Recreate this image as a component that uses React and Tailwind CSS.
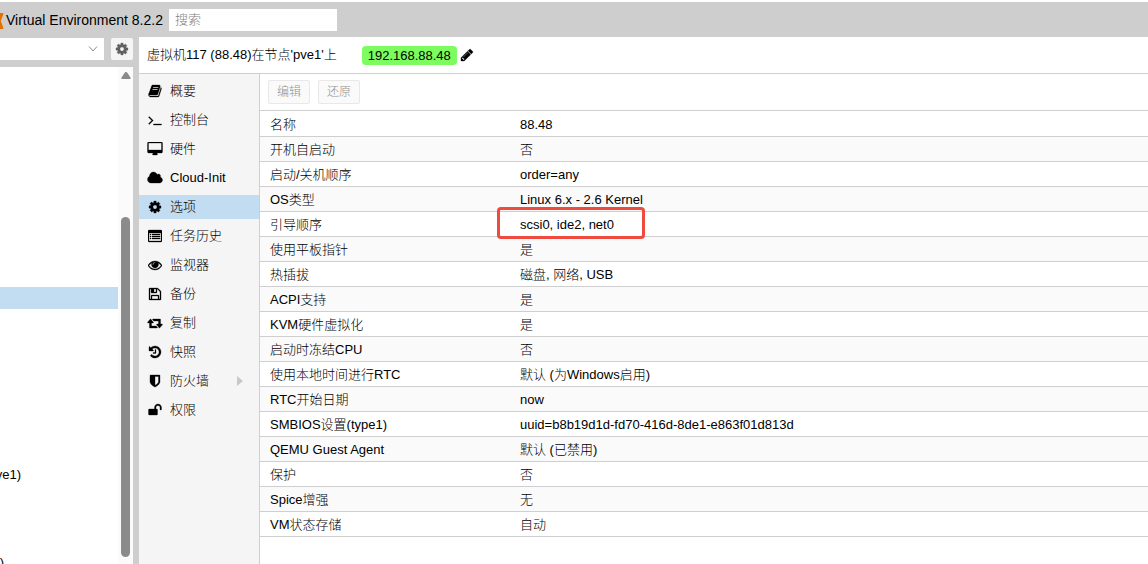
import { useState } from 'react';
import clsx from 'clsx';

const ICONS = {
  book: {
    width: 1792,
    d: 'M1703 478q40 57 18 129l-275 906q-19 64-76.5 107.5t-122.5 43.5h-923q-77 0-148.5-53.5t-99.5-131.5q-24-67-2-127 0-4 3-27t4-37q1-8-3-21.5t-3-19.5q2-11 8-21t16.5-23.5 16.5-23.5q23-38 45-91.5t30-91.5q3-10 .5-30t-.5-28q3-11 17-28t17-23q21-36 42-92t25-90q1-9-2.5-32t.5-28q4-13 22-30.5t22-22.5q19-26 42.5-84.5t27.5-96.5q1-8-3-25.5t-2-26.5q2-8 9-18t18-23 17-21q8-12 16.5-30.5t15-35 16-36 19.5-32 26.5-23.5 36-11.5 47.5 5.5l-1 3q38-9 51-9h761q74 0 114 56t18 130l-274 906q-36 119-71.5 153.5t-128.5 34.5h-869q-27 0-38 15-11 16-1 43 24 70 144 70h923q29 0 56-15.5t35-41.5l300-987q7-22 5-57 38 15 59 43zm-1064 2q-4 13 2 22.5t20 9.5h608q13 0 25.5-9.5t16.5-22.5l21-64q4-13-2-22.5t-20-9.5h-608q-13 0-25.5 9.5t-16.5 22.5zm-83 256q-4 13 2 22.5t20 9.5h608q13 0 25.5-9.5t16.5-22.5l21-64q4-13-2-22.5t-20-9.5h-608q-13 0-25.5 9.5t-16.5 22.5z',
  },
  terminal: {
    width: 1792,
    d: 'M649 983l-466 466q-10 10-23 10t-23-10l-50-50q-10-10-10-23t10-23l393-393-393-393q-10-10-10-23t10-23l50-50q10-10 23-10t23 10l466 466q10 10 10 23t-10 23zm1079 457v64q0 14-9 23t-23 9h-960q-14 0-23-9t-9-23v-64q0-14 9-23t23-9h960q14 0 23 9t9 23z',
  },
  desktop: {
    width: 2048,
    d: 'M1856 992v-832q0-13-9.5-22.5t-22.5-9.5h-1600q-13 0-22.5 9.5t-9.5 22.5v832q0 13 9.5 22.5t22.5 9.5h1600q13 0 22.5-9.5t9.5-22.5zm128-832v1088q0 66-47 113t-113 47h-544q0 37 16 77.5t32 71 16 43.5q0 26-19 45t-45 19h-512q-26 0-45-19t-19-45q0-14 16-44t32-70 16-78h-544q-66 0-113-47t-47-113v-1088q0-66 47-113t113-47h1600q66 0 113 47t47 113z',
  },
  cloud: {
    width: 2048,
    d: 'M1984 1152q0 159-112.5 271.5t-271.5 112.5h-1088q-185 0-316.5-131.5t-131.5-316.5q0-132 71-241.5t187-163.5q-2-28-2-43 0-212 150-362t362-150q158 0 286.5 88t187.5 230q70-62 166-62 106 0 181 75t75 181q0 75-41 138 129 30 213 134.5t84 239.5z',
  },
  cog: {
    width: 1792,
    d: 'M1152 896q0-106-75-181t-181-75-181 75-75 181 75 181 181 75 181-75 75-181zm512-109v222q0 12-8 23t-20 13l-185 28q-19 54-39 91 35 50 107 138 10 12 10 25t-9 23q-27 37-99 108t-94 71q-12 0-26-9l-138-108q-44 23-91 38-16 136-29 186-7 28-36 28h-222q-14 0-24.5-8.5t-11.5-21.5l-28-184q-49-16-90-37l-141 107q-10 9-25 9-14 0-25-11-126-114-165-168-7-10-7-23 0-12 8-23 15-21 51-66.5t54-70.5q-27-50-41-99l-183-27q-13-2-21-12.5t-8-23.5v-222q0-12 8-23t19-13l186-28q14-46 39-92-40-57-107-138-10-12-10-24 0-10 9-23 26-36 98.5-107.5t94.5-71.5q13 0 26 10l138 107q44-23 91-38 16-136 29-186 7-28 36-28h222q14 0 24.5 8.5t11.5 21.5l28 184q49 16 90 37l142-107q9-9 24-9 13 0 25 10 129 119 165 170 7 8 7 22 0 12-8 23-15 21-51 66.5t-54 70.5q26 50 41 98l183 28q13 2 21 12.5t8 23.5z',
  },
  list: {
    width: 1792,
    d: 'M160 128h1472q66 0 113 47t47 113v1216q0 66-47 113t-113 47h-1472q-66 0-113-47t-47-113v-1216q0-66 47-113t113-47zM128 512v992q0 32 32 32h1472q32 0 32-32v-992zM256 640h128v128h-128zM512 640h1024v128h-1024zM256 896h128v128h-128zM512 896h1024v128h-1024zM256 1152h128v128h-128zM512 1152h1024v128h-1024z',
  },
  eye: {
    width: 1792,
    d: 'M1664 960q-152-236-381-353 61 104 61 225 0 185-131.5 316.5t-316.5 131.5-316.5-131.5-131.5-316.5q0-121 61-225-229 117-381 353 133 205 333.5 326.5t434.5 121.5 434.5-121.5 333.5-326.5zm-720-384q0-20-14-34t-34-14q-125 0-214.5 89.5t-89.5 214.5q0 20 14 34t34 14 34-14 14-34q0-86 61-147t147-61q20 0 34-14t14-34zm848 384q0 34-20 69-140 230-376.5 368.5t-499.5 138.5-499.5-139-376.5-368q-20-35-20-69t20-69q140-229 376.5-368t499.5-139 499.5 139 376.5 368q20 35 20 69z',
  },
  floppy: {
    width: 1792,
    d: 'M512 1536h768v-384h-768v384zm896 0h128v-896q0-14-10-38.5t-20-34.5l-281-281q-10-10-34-20t-39-10v416q0 40-28 68t-68 28h-576q-40 0-68-28t-28-68v-416h-128v1280h128v-416q0-40 28-68t68-28h832q40 0 68 28t28 68v416zm-384-928v-320q0-13-9.5-22.5t-22.5-9.5h-192q-13 0-22.5 9.5t-9.5 22.5v320q0 13 9.5 22.5t22.5 9.5h192q13 0 22.5-9.5t9.5-22.5zm640 32v928q0 40-28 68t-68 28h-1344q-40 0-68-28t-28-68v-1344q0-40 28-68t68-28h928q40 0 88 20t76 48l280 280q28 28 48 76t20 88z',
  },
  retweet: {
    width: 2048,
    d: 'M1344 1504q0 13-9.5 22.5t-22.5 9.5h-960q-8 0-13.5-2t-9-7-5.5-8-3-11.5-1-11.5v-600h-192q-26 0-45-19t-19-45q0-24 15-41l320-384q19-22 49-22t49 22l320 384q15 17 15 41 0 26-19 45t-45 19h-192v384h576q16 0 25 11l160 192q7 10 7 21zm640-416q0 24-15 41l-320 384q-20 23-49 23t-49-23l-320-384q-15-17-15-41 0-26 19-45t45-19h192v-384h-576q-16 0-25-12l-160-192q-7-9-7-20 0-13 9.5-22.5t22.5-9.5h960q8 0 13.5 2t9 7 5.5 8 3 11.5 1 11.5v600h192q26 0 45 19t19 45z',
  },
  history: {
    width: 1792,
    d: 'M1664 896q0 156-61 298t-164 245-245 164-298 61q-172 0-327-72.5t-264-204.5q-7-10-6.5-22.5t8.5-20.5l137-138q10-9 25-9 16 2 23 12 73 95 179 147t225 52q104 0 198.5-40.5t163.5-109.5 109.5-163.5 40.5-198.5-40.5-198.5-109.5-163.5-163.5-109.5-198.5-40.5q-98 0-188 35.5t-160 101.5l137 138q31 30 14 69-17 40-59 40h-448q-26 0-45-19t-19-45v-448q0-42 40-59 39-17 69 14l130 129q107-101 244.5-156.5t284.5-55.5q156 0 298 61t245 164 164 245 61 298zm-640-288v448q0 14-9 23t-23 9h-320q-14 0-23-9t-9-23v-64q0-14 9-23t23-9h224v-352q0-14 9-23t23-9h64q14 0 23 9t9 23z',
  },
  shield: {
    width: 1792,
    d: 'M1344 960v-640h-448v1137q119-63 213-137 235-184 235-360zm192-768v768q0 86-33.5 170.5t-83 150-118 127.5-126.5 103-121 77.5-89.5 49.5-42.5 20q-12 6-26 6t-26-6q-16-7-42.5-20t-89.5-49.5-121-77.5-126.5-103-118-127.5-83-150-33.5-170.5v-768q0-26 19-45t45-19h1152q26 0 45 19t19 45z',
  },
  unlock: {
    width: 1792,
    d: 'M1728 576v256q0 26-19 45t-45 19h-64q-26 0-45-19t-19-45v-256q0-106-75-181t-181-75-181 75-75 181v192h96q40 0 68 28t28 68v576q0 40-28 68t-68 28h-960q-40 0-68-28t-28-68v-576q0-40 28-68t68-28h672v-192q0-185 131.5-316.5t316.5-131.5 316.5 131.5 131.5 316.5z',
  },
  pencil: {
    width: 1792,
    d: 'M491 1536l91-91-235-235-91 91v107h128v128h107zm523-928q0-22-22-22-10 0-17 7l-542 542q-7 7-7 17 0 22 22 22 10 0 17-7l542-542q7-7 7-17zm-54-192l416 416-832 832h-416v-416zm683 96q0 53-37 90l-166 166-416-416 166-165q36-38 90-38 53 0 91 38l235 234q37 39 37 91z',
  },
};

const MENU = [
  { icon: 'book', label: '概要' },
  { icon: 'terminal', label: '控制台' },
  { icon: 'desktop', label: '硬件' },
  { icon: 'cloud', label: 'Cloud-Init' },
  { icon: 'cog', label: '选项' },
  { icon: 'list', label: '任务历史' },
  { icon: 'eye', label: '监视器' },
  { icon: 'floppy', label: '备份' },
  { icon: 'retweet', label: '复制' },
  { icon: 'history', label: '快照' },
  { icon: 'shield', label: '防火墙', expandable: true },
  { icon: 'unlock', label: '权限' },
];

const OPTIONS = [
  { name: '名称', value: '88.48' },
  { name: '开机自启动', value: '否' },
  { name: '启动/关机顺序', value: 'order=any' },
  { name: 'OS类型', value: 'Linux 6.x - 2.6 Kernel' },
  { name: '引导顺序', value: 'scsi0, ide2, net0', marked: true },
  { name: '使用平板指针', value: '是' },
  { name: '热插拔', value: '磁盘, 网络, USB' },
  { name: 'ACPI支持', value: '是' },
  { name: 'KVM硬件虚拟化', value: '是' },
  { name: '启动时冻结CPU', value: '否' },
  { name: '使用本地时间进行RTC', value: '默认 (为Windows启用)' },
  { name: 'RTC开始日期', value: 'now' },
  { name: 'SMBIOS设置(type1)', value: 'uuid=b8b19d1d-fd70-416d-8de1-e863f01d813d' },
  { name: 'QEMU Guest Agent', value: '默认 (已禁用)' },
  { name: '保护', value: '否' },
  { name: 'Spice增强', value: '无' },
  { name: 'VM状态存储', value: '自动' },
];

// Tree rows, scrolled sideways so that only the row ends show
const TREE = Array.from({ length: 23 }, (_, i) => ({ id: i, tail: '' }));
TREE[10].selected = true;
TREE[18].tail = 've1)';
TREE[22].tail = ')';

function Icon({ name, className }) {
  const { width, d } = ICONS[name];
  return (
    <svg
      viewBox={`0 0 ${width} 1792`}
      className={clsx('h-3.5 shrink-0', width === 2048 ? 'w-4' : 'w-3.5', className)}
      fill="currentColor"
      stroke="currentColor"
      strokeWidth="40"
      fillRule={name === 'list' ? 'evenodd' : 'nonzero'}
      aria-hidden="true"
    >
      <path d={d} />
    </svg>
  );
}

function TopBar() {
  return (
    <header className="flex h-[37px] shrink-0 items-center border-t-2 border-white">
      <svg viewBox="0 0 4 16" className="mt-0.5 h-4 w-1" aria-hidden="true">
        <path d="M0 0H2.500L3.500 .8 .8 8 3.500 15.200 2.500 16H0Z" fill="#e57000" />
      </svg>
      <span className="ml-0.5 whitespace-nowrap text-sm">Virtual Environment 8.2.2</span>
      <input
        type="text"
        aria-label="搜索"
        placeholder="搜索"
        className="ml-1.5 h-[22px] w-[168px] bg-white px-1.5 text-[13px] outline-none placeholder:text-[#808080]"
      />
    </header>
  );
}

function ResourceTree() {
  return (
    <aside className="flex w-[133px] shrink-0 flex-col">
      <div className="flex h-[30px] items-start gap-[7px] pt-px">
        <div className="relative h-[22px] flex-1">
          <select aria-label="视图" className="h-full w-full appearance-none bg-white outline-none">
            <option value=""></option>
          </select>
          <svg viewBox="0 0 10 6" className="pointer-events-none absolute top-2 right-1.5 h-1.5 w-2.5" fill="none" stroke="#8a8a8a" aria-hidden="true">
            <path d="M1 .5L5 5 9 .5" />
          </svg>
        </div>
        <button
          type="button"
          aria-label="设置"
          className="flex size-[22px] items-center justify-center rounded-xs bg-[#f5f5f5] text-[#606060]"
        >
          <Icon name="cog" />
        </button>
      </div>
      <div className="flex min-h-0 flex-1 bg-white">
        <ul className="min-w-0 flex-1 overflow-hidden">
          {TREE.map(row => (
            <li key={row.id} className={clsx('flex h-[22px] items-center', row.selected && 'bg-[#c2ddf2]')}>
              {row.tail && (
                <span className={clsx('flex justify-end pt-0.5', row.tail === ')' ? 'w-1' : 'w-[21px]')}>{row.tail}</span>
              )}
            </li>
          ))}
        </ul>
        <div className="flex w-[15px] flex-col items-center bg-[#fbfbfb] pt-[5px] pb-[7px]">
          <svg viewBox="0 0 10 7" className="h-[7px] w-2.5 shrink-0" fill="#8b8b8b" aria-hidden="true">
            <path d="M5 0Q6 0 6.500 1L9.500 5.500Q10 7 9 7H1Q0 7 .5 5.500L3.500 1Q4 0 5 0Z" />
          </svg>
          <div className="mt-[138px] w-[9px] flex-1 rounded-full bg-[#8b8b8b]" />
        </div>
      </div>
    </aside>
  );
}

function SideMenu({ active, onSelect }) {
  return (
    <nav className="flex w-[121px] shrink-0 flex-col gap-[5px] border-r border-[#cfcfcf] bg-[#f5f5f5] pt-[5px]">
      {MENU.map(item => (
        <button
          key={item.label}
          type="button"
          onClick={() => onSelect(item.label)}
          className={clsx(
            'flex h-6 w-full items-center pl-2 text-left',
            item.label === active && 'bg-[#c2ddf2]'
          )}
        >
          <span className="flex w-4 shrink-0 justify-center">
            <Icon name={item.icon} />
          </span>
          <span className="ml-[7px] flex-1">{item.label}</span>
          {item.expandable && (
            <svg viewBox="0 0 6 10" className="mr-4 h-2.5 w-1.5" fill="#c8c8c8" aria-hidden="true">
              <path d="M0 0L6 5 0 10Z" />
            </svg>
          )}
        </button>
      ))}
    </nav>
  );
}

function OptionsTable() {
  return (
    <table className="mt-px w-full table-fixed border-separate border-spacing-0">
      <colgroup>
        <col className="w-[250px]" />
        <col />
      </colgroup>
      <tbody>
        {OPTIONS.map(option => (
          <tr key={option.name} className="even:bg-[#fafafa]">
            <th scope="row" className="h-[25px] truncate border-b border-[#cfcfcf] px-2.5 pt-0.5 text-left font-light">
              {option.name}
            </th>
            <td className="h-[25px] border-b border-[#cfcfcf] px-2.5 pt-0.5">
              <span className="relative block">
                {option.value}
                {option.marked && (
                  <span className="absolute -top-2 -left-[23px] h-8 w-[148px] rounded-sm border-3 border-[#f04a3e]" />
                )}
              </span>
            </td>
          </tr>
        ))}
      </tbody>
    </table>
  );
}

export default function App() {
  const [active, setActive] = useState('选项');

  return (
    <div className="flex h-screen flex-col overflow-hidden bg-[#cecece] font-['Liberation_Sans','Noto_Sans_CJK_SC',sans-serif] text-[13px] leading-5 font-light text-black">
      <TopBar />
      <div className="flex min-h-0 flex-1 gap-1.5">
        <ResourceTree />

        <main className="flex min-w-0 flex-1 flex-col bg-white">
          <div className="flex h-[37px] shrink-0 items-center border-b border-[#cfcfcf] pl-2">
            <h1>虚拟机117 (88.48)在节点'pve1'上</h1>
            <span className="ml-[25px] rounded-sm bg-[#7cfc5f] px-1.5 leading-[19px]">192.168.88.48</span>
            <button type="button" aria-label="编辑标签" className="ml-[3px]">
              <Icon name="pencil" />
            </button>
          </div>

          <div className="flex min-h-0 flex-1">
            <SideMenu active={active} onSelect={setActive} />

            <section className="min-w-0 flex-1">
              <div className="flex h-[37px] items-center gap-2 border-b border-[#cfcfcf] px-2">
                {['编辑', '还原'].map(label => (
                  <button
                    key={label}
                    type="button"
                    disabled
                    className="h-6 w-[42px] rounded-xs border border-[#e8e8e8] bg-[#fafafa] text-xs text-[#909090]"
                  >
                    {label}
                  </button>
                ))}
              </div>
              <OptionsTable />
            </section>
          </div>
        </main>
      </div>
    </div>
  );
}
